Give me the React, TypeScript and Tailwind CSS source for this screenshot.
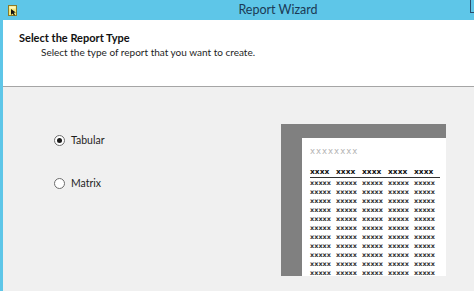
import React from 'react'

const cols = [0, 1, 2, 3, 4]
const rows = [0, 1, 2, 3, 4, 5, 6, 7, 8, 9, 10]

function WizardIcon() {
  return (
    <svg width="10" height="11" viewBox="0 0 10 11">
      <rect x="0.5" y="0.5" width="8" height="10" fill="#f4e77a" stroke="#8a7a2a" />
      <rect x="1.5" y="1.5" width="6" height="2" fill="#fff8c0" />
      <path d="M3 4 L3 10 L4.6 8.4 L6 10.6 L7 10 L5.7 7.8 L7.8 7.6 Z" fill="#111" />
    </svg>
  )
}

function Radio({ checked, label }: { checked?: boolean; label: string }) {
  return (
    <label className="flex items-center gap-[6px]">
      <span className="w-[11px] h-[11px] rounded-full border border-[#6d6d6d] bg-white flex items-center justify-center">
        {checked && <span className="w-[5px] h-[5px] rounded-full bg-[#1a1a1a]" />}
      </span>
      <span className="text-[10.5px] text-[#1e1e1e] leading-none">{label}</span>
    </label>
  )
}

function Preview() {
  return (
    <div className="w-[165px] h-[152px] bg-[#808080] pt-[14px] pl-[21px] flex">
      <div className="flex-1 bg-white pl-[8px] pr-[6px] pt-[9px] overflow-hidden font-['DejaVu_Sans',sans-serif]">
        <div className="text-[8.5px] leading-none tracking-[1px] text-[#b4b4b4]">xxxxxxxx</div>
        <div className="mt-[12px] flex border-b border-[#333] pb-[2px] font-bold text-[7.5px] leading-none text-[#111]">
          {cols.map((c) => (
            <span key={c} className="w-[26px]">xxxx</span>
          ))}
        </div>
        <div className="mt-[1px]">
          {rows.map((r) => (
            <div key={r} className="flex h-[9px] items-center text-[6.5px] font-semibold leading-none text-[#333]">
              {cols.map((c) => (
                <span key={c} className="w-[26px]">xxxxx</span>
              ))}
            </div>
          ))}
        </div>
      </div>
    </div>
  )
}

export default function App() {
  return (
    <div className="w-[474px] h-[291px] flex flex-col overflow-hidden bg-[#5ec6e8] font-['Lato',sans-serif]">
      {/* Title bar */}
      <div className="h-[20px] shrink-0 relative flex items-center">
        <div className="pl-[8px] pt-[1px]">
          <WizardIcon />
        </div>
        <div className="absolute left-0 right-0 top-0 h-[20px] flex items-center justify-center pl-[82px]">
          <span className="text-[12.5px] text-[#1b3a55] leading-none">Report Wizard</span>
        </div>
        <div className="absolute left-[470px] top-0 w-[8px] h-[13px] border-l border-b border-[#2b4c6a]" />
      </div>

      <div className="flex-1 flex">
        <div className="w-[3px] shrink-0" />
        <div className="flex-1 flex flex-col">
          {/* Header */}
          <div className="h-[67px] shrink-0 bg-white border-b border-[#a5a5a5] pl-[16px] pt-[10px]">
            <div className="text-[11px] font-bold text-[#111] leading-[15px]">Select the Report Type</div>
            <div className="text-[10px] text-[#1e1e1e] pl-[22px] leading-[14px]">
              Select the type of report that you want to create.
            </div>
          </div>

          {/* Body */}
          <div className="flex-1 bg-[#f0f0f0] flex">
            <div className="pl-[51px] pt-[48px] flex flex-col gap-[32px]">
              <Radio checked label="Tabular" />
              <Radio label="Matrix" />
            </div>
            <div className="ml-auto mr-[28px] mt-[37px]">
              <Preview />
            </div>
          </div>
        </div>
      </div>
    </div>
  )
}
